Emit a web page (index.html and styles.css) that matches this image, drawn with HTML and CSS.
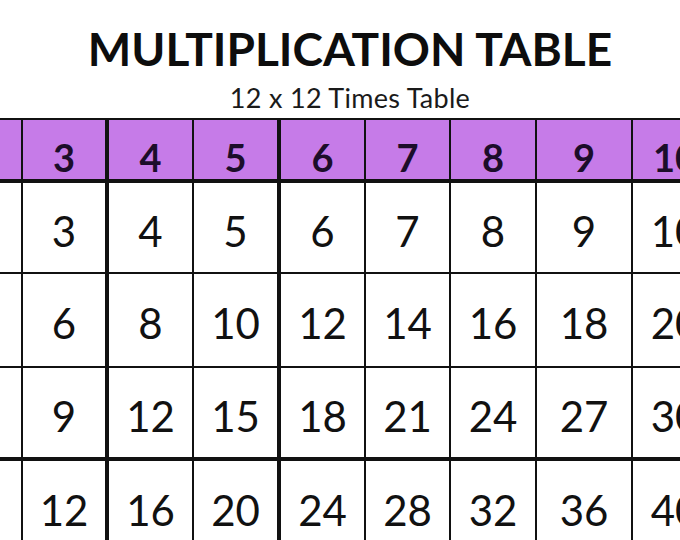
FILE: index.html
```html
<!DOCTYPE html>
<html>
<head>
<meta charset="utf-8">
<link rel="stylesheet" href="styles.css">
</head>
<body>
<div class="page">
  <header class="heading">
    <h1 class="title">MULTIPLICATION TABLE</h1>
    <p class="subtitle">12 x 12 Times Table</p>
  </header>
  <div class="viewport">
    <div class="grid">
      <div class="row head">
        <div class="cell">1</div><div class="cell">2</div><div class="cell w86 thick">3</div><div class="cell w85">4</div><div class="cell w87 thick">5</div><div class="cell w85">6</div><div class="cell w85">7</div><div class="cell w86">8</div><div class="cell w96">9</div><div class="cell">10</div><div class="cell">11</div><div class="cell">12</div>
      </div>
      <div class="row r1">
        <div class="cell">1</div><div class="cell">2</div><div class="cell w86 thick">3</div><div class="cell w85">4</div><div class="cell w87 thick">5</div><div class="cell w85">6</div><div class="cell w85">7</div><div class="cell w86">8</div><div class="cell w96">9</div><div class="cell">10</div><div class="cell">11</div><div class="cell">12</div>
      </div>
      <div class="row r2">
        <div class="cell">2</div><div class="cell">4</div><div class="cell w86 thick">6</div><div class="cell w85">8</div><div class="cell w87 thick">10</div><div class="cell w85">12</div><div class="cell w85">14</div><div class="cell w86">16</div><div class="cell w96">18</div><div class="cell">20</div><div class="cell">22</div><div class="cell">24</div>
      </div>
      <div class="row r3">
        <div class="cell">3</div><div class="cell">6</div><div class="cell w86 thick">9</div><div class="cell w85">12</div><div class="cell w87 thick">15</div><div class="cell w85">18</div><div class="cell w85">21</div><div class="cell w86">24</div><div class="cell w96">27</div><div class="cell">30</div><div class="cell">33</div><div class="cell">36</div>
      </div>
      <div class="row r4">
        <div class="cell">4</div><div class="cell">8</div><div class="cell w86 thick">12</div><div class="cell w85">16</div><div class="cell w87 thick">20</div><div class="cell w85">24</div><div class="cell w85">28</div><div class="cell w86">32</div><div class="cell w96">36</div><div class="cell">40</div><div class="cell">44</div><div class="cell">48</div>
      </div>
    </div>
  </div>
</div>
</body>
</html>
```
FILE: styles.css
```css
html, body {
  margin: 0;
  padding: 0;
  background: #ffffff;
}
body {
  width: 680px;
  height: 540px;
  overflow: hidden;
  font-family: Lato, "Open Sans", sans-serif;
  color: #111111;
}
.page {
  width: 680px;
  height: 540px;
  overflow: hidden;
}
.heading {
  padding-left: 20px;
  text-align: center;
  height: 118px;
}
.title {
  margin: 0;
  padding-top: 21px;
  font-size: 46px;
  line-height: 56px;
  font-weight: 700;
  letter-spacing: 0px;
  color: #0d0d0d;
}
.subtitle {
  margin: 5px 0 0 0;
  font-size: 27px;
  line-height: 32px;
  font-weight: 400;
  letter-spacing: 0.3px;
  color: #1a1a1a;
}
.viewport {
  overflow: hidden;
  width: 680px;
}
.grid {
  margin-left: -149px;
  width: 1200px;
  border-top: 2px solid #111;
}
.row {
  display: flex;
  border-bottom: 2px solid #111;
  box-sizing: border-box;
}
.cell {
  box-sizing: border-box;
  width: 86px;
  flex: 0 0 auto;
  border-right: 2px solid #111;
  display: flex;
  align-items: center;
  justify-content: center;
}
.cell.w85 { width: 85px; }
.cell.w86 { width: 86px; }
.cell.w87 { width: 87px; }
.cell.w96 { width: 96px; }
.cell.thick {
  border-right-width: 4px;
}
.head {
  height: 63px;
  background: #c67be8;
  border-bottom-width: 4px;
  font-size: 38px;
  font-weight: 700;
  color: #1c0d2a;
}
.head .cell {
  padding-top: 14px;
}
.r1, .r2, .r3, .r4 {
  font-size: 42px;
  font-weight: 400;
}
.r1 { height: 91px; }
.r2 { height: 94px; }
.r3 { height: 93px; border-bottom-width: 4px; }
.r4 { height: 93px; }
.r1 .cell, .r2 .cell, .r3 .cell, .r4 .cell {
  padding-top: 6px;
}
```
